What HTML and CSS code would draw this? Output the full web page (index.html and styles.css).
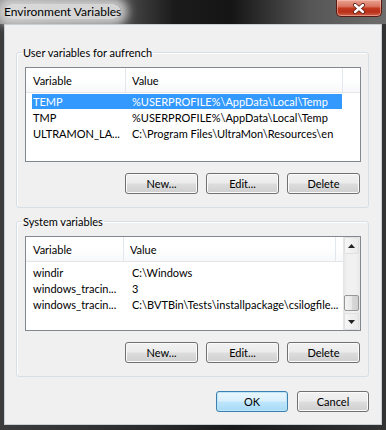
FILE: index.html
```html
<!DOCTYPE html>
<html lang="en">
<head>
  <meta charset="UTF-8" />
  <title>Environment Variables</title>
  <link rel="stylesheet" href="styles.css">
</head>
<body>
  <div class="window">
    <div class="titlebar">
      <span class="title">Environment Variables</span>
      <button class="close" title="Close">
        <svg width="14" height="11" viewBox="0 0 14 11">
          <path d="M3 2 L11 9 M11 2 L3 9" stroke="#5a1a10" stroke-width="4" stroke-linecap="round" fill="none"/>
          <path d="M3 2 L11 9 M11 2 L3 9" stroke="#fff" stroke-width="2.4" stroke-linecap="round" fill="none"/>
        </svg>
      </button>
    </div>

    <div class="client">
      <fieldset class="group">
        <legend>User variables for aufrench</legend>
        <div class="listview">
          <div class="lv-main">
            <div class="lv-header">
              <span class="hcol var">Variable</span>
              <span class="hcol val">Value</span>
              <span class="hcol fill"></span>
            </div>
            <div class="lv-rows">
              <div class="lv-row selected"><span class="cell var">TEMP</span><span class="cell val">%USERPROFILE%\AppData\Local\Temp</span></div>
              <div class="lv-row"><span class="cell var">TMP</span><span class="cell val">%USERPROFILE%\AppData\Local\Temp</span></div>
              <div class="lv-row"><span class="cell var">ULTRAMON_LA...</span><span class="cell val">C:\Program Files\UltraMon\Resources\en</span></div>
            </div>
          </div>
        </div>
        <div class="btn-row">
          <button class="btn">New...</button>
          <button class="btn">Edit...</button>
          <button class="btn">Delete</button>
        </div>
      </fieldset>

      <fieldset class="group second">
        <legend>System variables</legend>
        <div class="listview">
          <div class="lv-main">
            <div class="lv-header">
              <span class="hcol var">Variable</span>
              <span class="hcol val">Value</span>
              <span class="hcol fill"></span>
            </div>
            <div class="lv-rows scrolled">
              <div class="lv-row"><span class="cell var">windir</span><span class="cell val">C:\Windows</span></div>
              <div class="lv-row"><span class="cell var">windows_tracin...</span><span class="cell val">3</span></div>
              <div class="lv-row"><span class="cell var">windows_tracin...</span><span class="cell val">C:\BVTBin\Tests\installpackage\csilogfile...</span></div>
            </div>
          </div>
          <div class="lv-scroll">
            <div class="sb-btn">
              <svg width="7" height="4" viewBox="0 0 7 4"><path d="M0 4 L3.5 0 L7 4 Z" fill="#222"/></svg>
            </div>
            <div class="sb-track">
              <div class="sb-thumb"></div>
            </div>
            <div class="sb-btn">
              <svg width="7" height="4" viewBox="0 0 7 4"><path d="M0 0 L7 0 L3.5 4 Z" fill="#222"/></svg>
            </div>
          </div>
        </div>
        <div class="btn-row">
          <button class="btn">New...</button>
          <button class="btn">Edit...</button>
          <button class="btn">Delete</button>
        </div>
      </fieldset>

      <div class="dialog-buttons">
        <button class="btn default">OK</button>
        <button class="btn">Cancel</button>
      </div>
    </div>
  </div>
</body>
</html>
```

FILE: styles.css
```css
body {
  margin: 0;
  font-family: "Segoe UI", Lato, "Noto Sans", sans-serif;
  font-size: 11px;
  color: #000;
}
.window {
  width: 386px;
  height: 430px;
  display: flex;
  flex-direction: column;
  background: linear-gradient(90deg, #3c3c3c 0%, #2a2a2a 40%, #1a1a1a 60%, #333 100%);
  overflow: hidden;
}
.titlebar {
  height: 24px;
  flex-shrink: 0;
  display: flex;
  justify-content: space-between;
  align-items: flex-start;
  padding: 0 4px;
  background: linear-gradient(90deg, #8a8a8a 0%, #5a5a5a 28%, #1b1b1b 45%, #151515 60%, #555 80%, #6d6d6d 100%);
}
.title {
  margin-top: 4px;
  font-size: 12px;
  line-height: 15px;
  background: rgba(226, 226, 226, 0.9);
  border-radius: 8px;
  box-shadow: 0 0 10px 7px rgba(220, 220, 220, 0.85);
}
.close {
  width: 46px;
  height: 17px;
  padding: 0;
  border: 1px solid #5a1c12;
  border-top: none;
  border-radius: 0 0 5px 5px;
  background: linear-gradient(#e9a393 0%, #d9735f 40%, #c2391f 52%, #b9301a 75%, #d0644a 100%);
  box-shadow: inset 0 0 0 1px rgba(255, 200, 190, 0.5);
  display: flex;
  align-items: center;
  justify-content: center;
}
.client {
  flex: 1;
  margin: 0 4px 5px 4px;
  background: #f0f0f0;
  border: 1px solid #c9ced3;
  padding: 20px 12px 0 11px;
}
.group {
  margin: 0;
  padding: 7px 7px 13px 8px;
  border: 1px solid #d5dfe5;
  border-radius: 3px;
  box-shadow: inset 1px 1px 0 #fff;
  min-width: 0;
}
.group.second {
  margin-top: 6px;
}
.group legend {
  padding: 0 1px;
  margin-left: -3px;
  line-height: 15px;
}
.listview {
  height: 95px;
  box-sizing: border-box;
  border: 1px solid #828790;
  background: #fff;
  display: flex;
  overflow: hidden;
}
.lv-main {
  flex: 1;
  min-width: 0;
}
.lv-header {
  display: flex;
  height: 25px;
  box-sizing: border-box;
  border-bottom: 1px solid #e5e5e5;
  background: linear-gradient(#fff 0%, #fff 45%, #f7f8fa 100%);
}
.hcol {
  display: flex;
  align-items: center;
  box-sizing: border-box;
  border-right: 1px solid #e3e8ee;
  padding-left: 7px;
}
.hcol.var { width: 100px; }
.hcol.val { width: 217px; padding-left: 6px; }
.hcol.fill { flex: 1; border-right: none; }
.lv-rows.scrolled {
  padding-top: 2px;
}
.lv-row {
  display: flex;
  align-items: center;
  width: 310px;
  height: 15px;
  margin: 1px 0 1px 6px;
  white-space: nowrap;
}
.lv-row.selected {
  background: #3399ff;
  color: #fff;
}
.cell {
  overflow: hidden;
  box-sizing: border-box;
}
.cell.var { width: 93px; padding-left: 1px; }
.cell.val { width: 217px; padding-left: 7px; }
.lv-scroll {
  width: 17px;
  flex-shrink: 0;
  display: flex;
  flex-direction: column;
  background: linear-gradient(90deg, #e4e4e4 0%, #f1f1f1 25%, #f1f1f1 75%, #e9e9e9 100%);
}
.sb-btn {
  height: 17px;
  box-sizing: border-box;
  margin: 0 1px;
  border: 1px solid #e0e0e0;
  border-radius: 2px;
  background: linear-gradient(90deg, #f6f6f6, #eaeaea);
  display: flex;
  align-items: center;
  justify-content: center;
}
.sb-track {
  flex: 1;
  display: flex;
  flex-direction: column;
  justify-content: flex-end;
}
.sb-thumb {
  height: 16px;
  margin: 0 1px 2px 1px;
  box-sizing: border-box;
  border: 1px solid #979797;
  border-radius: 2px;
  background: linear-gradient(90deg, #f4f4f4 0%, #e8e8e8 50%, #d9d9d9 51%, #cfcfcf 100%);
}
.btn-row {
  display: flex;
  justify-content: flex-end;
  gap: 8px;
  margin-top: 11px;
  padding-right: 1px;
}
.btn {
  width: 73px;
  height: 21px;
  padding: 0;
  font: inherit;
  color: #000;
  border: 1px solid #707070;
  border-radius: 3px;
  background: linear-gradient(#f2f2f2 0%, #ebebeb 48%, #dddddd 52%, #cfcfcf 100%);
  box-shadow: inset 0 0 0 1px #fbfbfb;
}
.btn.default {
  border-color: #3c7fb1;
  background: linear-gradient(#eaf6fd 0%, #d9f0fc 48%, #bee6fd 52%, #a7d9f5 100%);
  box-shadow: inset 0 0 0 1px #bfe6f8;
}
.dialog-buttons {
  display: flex;
  justify-content: flex-end;
  gap: 9px;
  margin-top: 14px;
}
.dialog-buttons .btn {
  width: 72px;
}
```
